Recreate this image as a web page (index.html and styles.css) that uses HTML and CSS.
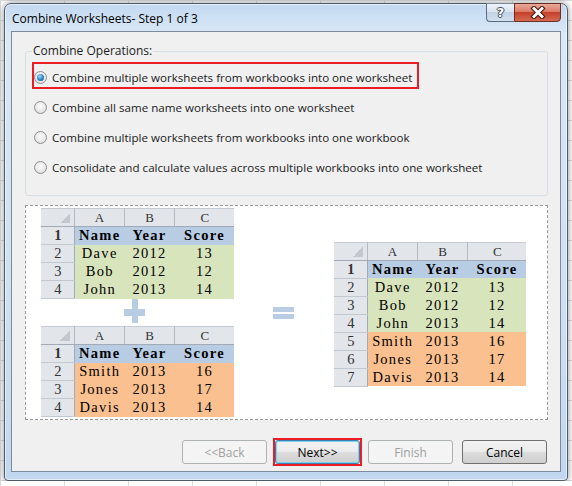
FILE: index.html
```html
<!DOCTYPE html>
<html lang="en">
<head>
	<meta charset="UTF-8">
	<title>Combine Worksheets</title>
	<link rel="stylesheet" href="styles.css">
</head>
<body>
	<div class="window">
		<div class="titlebar">
			<span class="title">Combine Worksheets- Step 1 of 3</span>
			<div class="caption">
				<span class="cbtn help">?</span>
				<span class="cbtn close">
					<svg width="18" height="13" viewBox="0 0 18 13">
						<path d="M5 2.5 L13 10.5 M13 2.5 L5 10.5" stroke="#4a1d15" stroke-width="5" stroke-linecap="square"/>
						<path d="M5 2.5 L13 10.5 M13 2.5 L5 10.5" stroke="#fff" stroke-width="2.8" stroke-linecap="square"/>
					</svg>
				</span>
			</div>
		</div>
		<div class="client">
			<fieldset class="ops">
				<legend>Combine Operations:</legend>
				<label class="opt sel"><span class="radio on"></span>Combine multiple worksheets from workbooks into one worksheet</label>
				<label class="opt"><span class="radio"></span>Combine all same name worksheets into one worksheet</label>
				<label class="opt"><span class="radio"></span>Combine multiple worksheets from workbooks into one workbook</label>
				<label class="opt"><span class="radio"></span>Consolidate and calculate values across multiple workbooks into one worksheet</label>
			</fieldset>

			<div class="preview">
				<div class="left">
					<table class="sheet">
						<colgroup><col class="c0"><col class="c1"><col class="c2"><col class="c3"></colgroup>
						<tr class="hd"><td class="corner"></td><td>A</td><td>B</td><td>C</td></tr>
						<tr class="title-row"><td class="rn">1</td><td>Name</td><td>Year</td><td>Score</td></tr>
						<tr class="green"><td class="rn">2</td><td>Dave</td><td>2012</td><td>13</td></tr>
						<tr class="green"><td class="rn">3</td><td>Bob</td><td>2012</td><td>12</td></tr>
						<tr class="green"><td class="rn">4</td><td>John</td><td>2013</td><td>14</td></tr>
					</table>
					<div class="plus"></div>
					<table class="sheet">
						<colgroup><col class="c0"><col class="c1"><col class="c2"><col class="c3"></colgroup>
						<tr class="hd"><td class="corner"></td><td>A</td><td>B</td><td>C</td></tr>
						<tr class="title-row"><td class="rn">1</td><td>Name</td><td>Year</td><td>Score</td></tr>
						<tr class="orange"><td class="rn">2</td><td>Smith</td><td>2013</td><td>16</td></tr>
						<tr class="orange"><td class="rn">3</td><td>Jones</td><td>2013</td><td>17</td></tr>
						<tr class="orange"><td class="rn">4</td><td>Davis</td><td>2013</td><td>14</td></tr>
					</table>
				</div>
				<div class="equals"></div>
				<table class="sheet result">
					<colgroup><col class="c0"><col class="c1"><col class="c2"><col class="c3"></colgroup>
					<tr class="hd"><td class="corner"></td><td>A</td><td>B</td><td>C</td></tr>
					<tr class="title-row"><td class="rn">1</td><td>Name</td><td>Year</td><td>Score</td></tr>
					<tr class="green"><td class="rn">2</td><td>Dave</td><td>2012</td><td>13</td></tr>
					<tr class="green"><td class="rn">3</td><td>Bob</td><td>2012</td><td>12</td></tr>
					<tr class="green"><td class="rn">4</td><td>John</td><td>2013</td><td>14</td></tr>
					<tr class="orange"><td class="rn">5</td><td>Smith</td><td>2013</td><td>16</td></tr>
					<tr class="orange"><td class="rn">6</td><td>Jones</td><td>2013</td><td>17</td></tr>
					<tr class="orange"><td class="rn">7</td><td>Davis</td><td>2013</td><td>14</td></tr>
				</table>
			</div>

			<div class="buttons">
				<button class="btn" disabled>&lt;&lt;Back</button>
				<span class="ring"><button class="btn focus">Next&gt;&gt;</button></span>
				<button class="btn" disabled>Finish</button>
				<button class="btn cancel">Cancel</button>
			</div>
		</div>
	</div>
</body>
</html>
```

FILE: styles.css
```css
*{
	margin:0;
	padding:0;
	box-sizing:border-box;
}
body{
	background-color:#fff;
	background-image:linear-gradient(to right,#d9dbde 1px,transparent 1px),linear-gradient(#d9dbde 1px,transparent 1px);
	background-size:64px 20px;
	padding:3px 0 0 4px;
	font-family:"Open Sans","Liberation Sans",sans-serif;
	font-size:11.6px;
	color:#1b1b1b;
}
.window{
	width:564px;
	height:478px;
	border:1px solid #4f5c6c;
	border-radius:7px 7px 4px 4px;
	background:linear-gradient(to bottom,#c3d9f1 0,#dae8f7 30px,#cfe0f3 60%,#c2d8f0 100%);
	box-shadow:0 0 7px rgba(0,0,0,.45),inset 0 0 0 1px rgba(255,255,255,.55);
	display:flex;
	flex-direction:column;
}
.titlebar{
	height:27px;
	display:flex;
	align-items:flex-start;
	padding-left:7px;
}
.title{
	align-self:center;
	font-size:12px;
	color:#000;
	margin-top:1px;
}
.caption{
	margin-left:auto;
	margin-right:6px;
	margin-top:-1px;
	display:flex;
}
.cbtn{
	height:19px;
	display:flex;
	align-items:center;
	justify-content:center;
	border:1px solid #5b6b80;
	border-top-color:#7a8798;
}
.help{
	width:28px;
	border-radius:0 0 0 4px;
	border-right:none;
	background:linear-gradient(to bottom,#eef3f9 0,#d9e4f0 45%,#c2d2e4 50%,#d3e0ee 100%);
	color:#fff;
	font-family:"DejaVu Sans",sans-serif;
	font-weight:bold;
	font-size:13px;
	text-shadow:1px 0 0 #3c4a5b,-1px 0 0 #3c4a5b,0 1px 0 #3c4a5b,0 -1px 0 #3c4a5b;
}
.close{
	width:47px;
	border-radius:0 0 4px 0;
	border-color:#6a2e24;
	background:linear-gradient(to bottom,#e9a99b 0,#dc7b66 45%,#c5402a 50%,#d66a52 100%);
}
.client{
	flex:1;
	margin:0 6px 8px 6px;
	border:1px solid #7d8a99;
	background:#f0f0f0;
	padding:11px 12px 0 13px;
}
.ops{
	border:1px solid #d5dfe5;
	border-radius:3px;
	padding:3px 6px 13px 6px;
}
.ops legend{
	padding:0 1px;
	line-height:16px;
	font-size:12px;
}
.opt{
	display:flex;
	align-items:center;
	gap:5px;
	width:fit-content;
	height:27px;
	padding:3px 5px 0 0;
	margin-bottom:3px;
	border:2px solid transparent;
	white-space:nowrap;
}
.opt.sel{
	border-color:#ec1c24;
}
.radio{
	width:13px;
	height:13px;
	border-radius:50%;
	border:1px solid #8e8f8f;
	background:radial-gradient(circle at 50% 40%,#fdfdfd 0,#e7e7e7 60%,#d2d2d2 100%);
	display:flex;
	align-items:center;
	justify-content:center;
}
.radio.on::after{
	content:"";
	width:7px;
	height:7px;
	border-radius:50%;
	background:radial-gradient(circle at 40% 35%,#a8e2fb 0,#3a8fcf 45%,#11508e 100%);
}
.preview{
	margin-top:9px;
	height:215px;
	border:1px dashed #9a9a9a;
	background:#fff;
	display:flex;
	align-items:center;
	padding:0 20px 0 15px;
}
.left{
	display:flex;
	flex-direction:column;
}
.plus{
	width:21px;
	height:24px;
	margin:0 0 3px 83px;
	background:
		linear-gradient(#b8cce4,#b8cce4) center/6px 100% no-repeat,
		linear-gradient(#b8cce4,#b8cce4) 0 10px/100% 7px no-repeat;
}
.equals{
	width:21px;
	height:12px;
	margin:0 40px 0 39px;
	background:
		linear-gradient(#b8cce4,#b8cce4) 0 0/100% 5px no-repeat,
		linear-gradient(#b8cce4,#b8cce4) 0 7px/100% 5px no-repeat;
}
.sheet{
	border-collapse:collapse;
	table-layout:fixed;
	width:193px;
	font-family:"Liberation Serif",serif;
	font-size:14.5px;
	letter-spacing:1.3px;
	color:#000;
}
.result{
	margin-top:3px;
	width:192px;
}
.c0{width:33px;}
.c1{width:50px;}
.c2{width:50px;}
.c3{width:60px;}
.result .c3{width:59px;}
.sheet td{
	height:18px;
	padding:0 0 0 1px;
	text-align:center;
	line-height:17px;
	white-space:nowrap;
}
.hd td{
	background:#e2e6eb;
	color:#333;
	font-size:13px;
	letter-spacing:0;
	border-right:1px solid #b3bac3;
	border-bottom:1px solid #a2abb5;
	border-top:1px solid #c5cbd2;
}
.hd td:last-child{
	border-right:none;
}
.sheet td.corner{
	background:#e2e6eb linear-gradient(135deg,transparent 50%,#c3c8ce 50%) no-repeat right 4px bottom 3px/10px 10px;
}
.sheet td.rn{
	background:#e2e6eb;
	color:#333;
	letter-spacing:0;
	border-right:1px solid #a2abb5;
	border-bottom:1px solid #c3c9d0;
}
.title-row td{
	background:#b8cce4;
	font-weight:bold;
}
.green td{
	background:#d8e4bc;
}
.orange td{
	background:#fac090;
}
.buttons{
	display:flex;
	justify-content:flex-end;
	align-items:center;
	gap:8px;
	margin:20px 1px 0 0;
}
.btn{
	width:85px;
	height:24px;
	font-family:inherit;
	font-size:12px;
	color:#000;
	border:1px solid #707070;
	border-radius:3px;
	background:linear-gradient(to bottom,#f2f2f2 0,#ebebeb 50%,#dddddd 50%,#cfcfcf 100%);
}
.btn:disabled{
	color:#a0a0a0;
	border-color:#adb2b5;
	background:#f4f4f4;
}
.ring{
	display:flex;
	border:2px solid #ec1c24;
	margin:-2px;
}
.btn.focus{
	border-color:#3c7fb1;
	box-shadow:inset 0 0 0 1px #7ed0f3;
}
.btn.cancel{
	margin-left:1px;
}
```
